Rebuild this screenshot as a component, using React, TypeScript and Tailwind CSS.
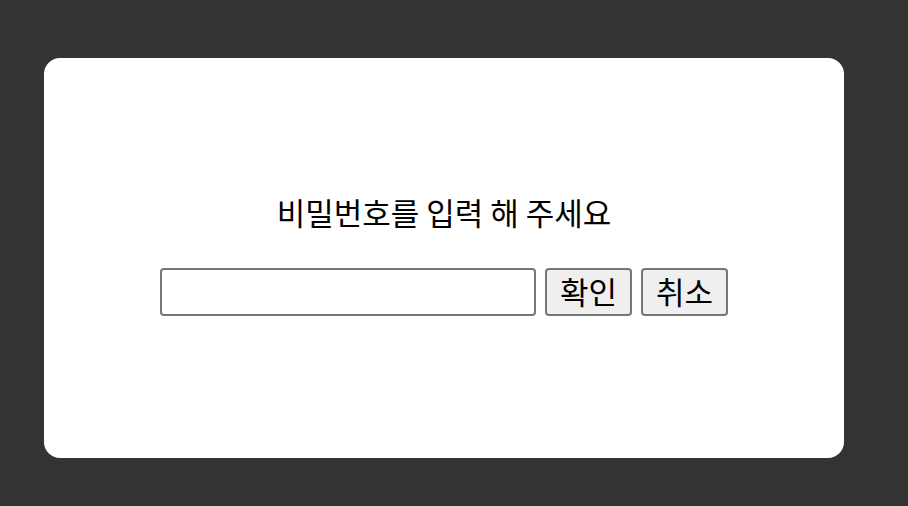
export default function App() {
  return (
    <div
      className="min-h-[506px] w-full bg-[#333333] pl-[44px] pt-[58px]"
      style={{ fontFamily: '"Noto Sans CJK KR", "Noto Sans", sans-serif' }}
    >
      <div className="flex h-[400px] w-[800px] flex-col items-center justify-center rounded-2xl bg-white">
        <p className="mb-[2px] text-[31px] leading-[40px] text-black">비밀번호를 입력 해 주세요</p>
        <div className="mb-[8px] mt-[34px] flex items-center gap-[9px]">
          <input
            type="password"
            className="h-[48px] w-[376px] rounded-[4px] border-2 border-[#767676] bg-white px-2 text-[24px] outline-none"
          />
          <button className="h-[48px] w-[87px] rounded-[4px] border-2 border-[#767676] bg-[#efefef] pb-[4px] text-[31px] leading-none text-black">
            확인
          </button>
          <button className="h-[48px] w-[87px] rounded-[4px] border-2 border-[#767676] bg-[#efefef] pb-[4px] text-[31px] leading-none text-black">
            취소
          </button>
        </div>
      </div>
    </div>
  );
}
